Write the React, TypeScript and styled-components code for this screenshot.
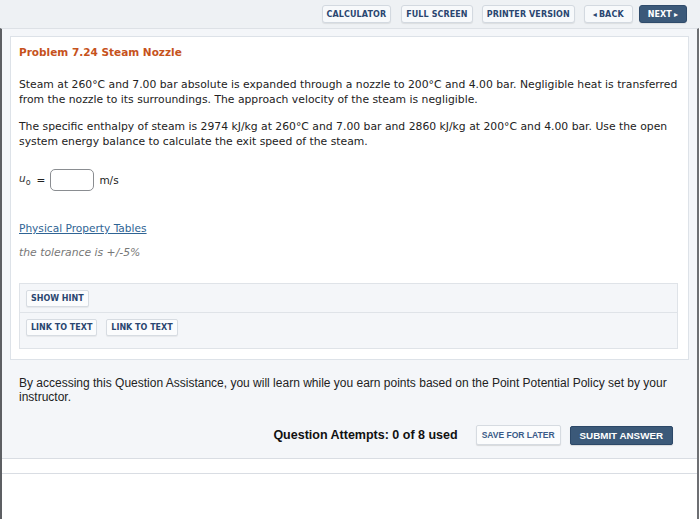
import React from "react";
import styled, { createGlobalStyle } from "styled-components";

const GlobalStyle = createGlobalStyle`
  html, body {
    margin: 0;
    padding: 0;
    background: #ffffff;
  }
  body {
    font-family: "DejaVu Sans", Verdana, sans-serif;
    color: #222;
  }
`;

const Page = styled.div`
  display: flex;
  flex-direction: column;
  width: 700px;
  height: 519px;
  overflow: hidden;
`;

const TopBar = styled.div`
  height: 28px;
  flex: none;
  display: flex;
  align-items: center;
  justify-content: flex-end;
  padding-right: 13px;
  background: #eef1f4;
`;

const NavButton = styled.button<{ primary?: boolean; wide?: boolean; gap: number }>`
  height: 18px;
  margin-left: ${(p) => p.gap}px;
  padding: 0 ${(p) => (p.wide ? "8px" : "4px")};
  border-radius: 3px;
  border: 1px solid ${(p) => (p.primary ? "#2f4b6b" : "#d3d9e0")};
  background: ${(p) => (p.primary ? "#3b5979" : "#f7f9fb")};
  color: ${(p) => (p.primary ? "#ffffff" : "#2a4670")};
  font-family: "DejaVu Sans", Verdana, sans-serif;
  font-weight: bold;
  font-size: 8px;
  letter-spacing: 0.1px;
  cursor: pointer;
  box-shadow: 0 1px 1px rgba(0, 0, 0, 0.08);
`;

const Arrow = styled.span<{ after?: boolean }>`
  font-size: 8px;
  margin: ${(p) => (p.after ? "0 0 0 2px" : "0 2px 0 0")};
`;

const Frame = styled.div`
  flex: 1;
  display: flex;
  flex-direction: column;
  border-left: 2px solid #5d5f63;
  border-right: 2px solid #6d6f73;
  margin-right: 1px;
  border-top: 1px solid #dde1e6;
  background: #ffffff;
`;

const Panel = styled.div`
  background: #f4f6f9;
  padding: 7px 8px 0 8px;
  border-bottom: 1px solid #d9dde3;
`;

const Card = styled.div`
  background: #ffffff;
  border: 1px solid #dde2e8;
  padding: 8px 9px 10px 8px;
`;

const Title = styled.h2`
  margin: 0;
  font-size: 10.5px;
  font-weight: bold;
  color: #c6521c;
  line-height: 14px;
`;

const Para = styled.p<{ space: number }>`
  margin: ${(p) => p.space}px 0 0;
  font-size: 10.8px;
  line-height: 15px;
  color: #222;
`;

const AnswerRow = styled.div`
  display: flex;
  align-items: center;
  gap: 5px;
  margin-top: 20px;
  font-size: 10.5px;
  color: #222;
`;

const Symbol = styled.span`
  font-style: italic;
  color: #333;
  margin-right: 1px;
  sub {
    font-style: normal;
    font-size: 8px;
  }
`;

const AnswerInput = styled.input`
  width: 44px;
  height: 22px;
  box-sizing: border-box;
  border: 1px solid #8a8d91;
  border-radius: 5px;
  background: #fff;
`;

const LinkLine = styled.div`
  margin-top: 28px;
  line-height: 15px;
`;

const Link = styled.a`
  font-size: 10.6px;
  color: #2f6494;
  text-decoration: underline;
`;

const Note = styled.div`
  margin-top: 9px;
  line-height: 15px;
  font-size: 10.8px;
  font-style: italic;
  color: #777;
`;

const HintBox = styled.div`
  margin-top: 23px;
  background: #f4f6f9;
  border: 1px solid #dfe3e8;
  margin-right: 1px;
`;

const HintRow = styled.div<{ divided?: boolean }>`
  display: flex;
  gap: 9px;
  padding: 6px 6px;
  border-top: ${(p) => (p.divided ? "1px solid #dfe3e8" : "none")};
  padding-bottom: ${(p) => (p.divided ? "12px" : "5px")};
`;

const SmallButton = styled.button`
  height: 17px;
  padding: 0 4px;
  border: 1px solid #d7dce2;
  border-radius: 2px;
  background: #fbfcfd;
  color: #2a4670;
  font-family: "DejaVu Sans", Verdana, sans-serif;
  font-size: 8px;
  font-weight: bold;
  box-shadow: 0 1px 1px rgba(0, 0, 0, 0.06);
`;

const Assist = styled.div`
  padding: 16px 10px 13px 9px;
`;

const AssistText = styled.p`
  margin: 0;
  font-family: "Liberation Sans", Arial, sans-serif;
  font-size: 12px;
  line-height: 14px;
  color: #222;
`;

const ActionRow = styled.div`
  display: flex;
  align-items: center;
  justify-content: flex-end;
  gap: 9px;
  margin-top: 21px;
  padding-right: 6px;
`;

const Attempts = styled.span`
  font-family: "Liberation Sans", Arial, sans-serif;
  font-weight: bold;
  font-size: 12.5px;
  color: #111;
  margin-right: 9px;
`;

const ActionButton = styled.button<{ primary?: boolean }>`
  height: ${(p) => (p.primary ? "19px" : "20px")};
  padding: 0 ${(p) => (p.primary ? "9px" : "5px")};
  border-radius: 2px;
  border: 1px solid ${(p) => (p.primary ? "#2c4868" : "#d6dbe1")};
  background: ${(p) => (p.primary ? "#3b5979" : "#fbfcfd")};
  color: ${(p) => (p.primary ? "#ffffff" : "#3a5b88")};
  font-family: "Liberation Sans", Arial, sans-serif;
  font-weight: bold;
  font-size: ${(p) => (p.primary ? "9.8px" : "8.5px")};
  box-shadow: 0 1px 1px rgba(0, 0, 0, 0.12);
`;

const Strip = styled.div`
  height: 14px;
  border-bottom: 1px solid #d9dde3;
`;

export default function App() {
  return (
    <Page>
      <GlobalStyle />
      <TopBar>
        <NavButton gap={0}>CALCULATOR</NavButton>
        <NavButton gap={10}>FULL SCREEN</NavButton>
        <NavButton gap={9}>PRINTER VERSION</NavButton>
        <NavButton gap={9} wide>
          <Arrow>◂</Arrow>BACK
        </NavButton>
        <NavButton gap={6} wide primary>
          NEXT<Arrow after>▸</Arrow>
        </NavButton>
      </TopBar>
      <Frame>
        <Panel>
          <Card>
            <Title>Problem 7.24 Steam Nozzle</Title>
            <Para space={18}>
              Steam at 260°C and 7.00 bar absolute is expanded through a nozzle to 200°C and 4.00
              bar. Negligible heat is transferred from the nozzle to its surroundings. The approach
              velocity of the steam is negligible.
            </Para>
            <Para space={12}>
              The specific enthalpy of steam is 2974 kJ/kg at 260°C and 7.00 bar and 2860 kJ/kg at
              200°C and 4.00 bar. Use the open system energy balance to calculate the exit speed of
              the steam.
            </Para>
            <AnswerRow>
              <Symbol>
                u<sub>o</sub>
              </Symbol>
              <span>=</span>
              <AnswerInput />
              <span>m/s</span>
            </AnswerRow>
            <LinkLine>
              <Link href="#">Physical Property Tables</Link>
            </LinkLine>
            <Note>the tolerance is +/-5%</Note>
            <HintBox>
              <HintRow>
                <SmallButton>SHOW HINT</SmallButton>
              </HintRow>
              <HintRow divided>
                <SmallButton>LINK TO TEXT</SmallButton>
                <SmallButton>LINK TO TEXT</SmallButton>
              </HintRow>
            </HintBox>
          </Card>
          <Assist>
            <AssistText>
              By accessing this Question Assistance, you will learn while you earn points based on
              the Point Potential Policy set by your instructor.
            </AssistText>
            <ActionRow>
              <Attempts>Question Attempts: 0 of 8 used</Attempts>
              <ActionButton>SAVE FOR LATER</ActionButton>
              <ActionButton primary>SUBMIT ANSWER</ActionButton>
            </ActionRow>
          </Assist>
        </Panel>
        <Strip />
      </Frame>
    </Page>
  );
}
